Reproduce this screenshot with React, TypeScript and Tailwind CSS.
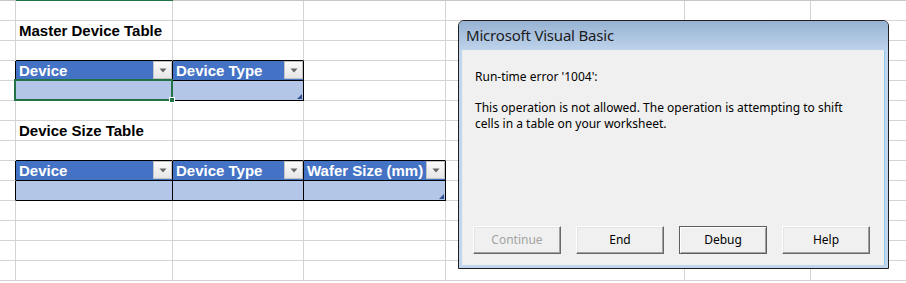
const colW = ['w-[16px]', 'w-[157px]', 'w-[131px]', 'w-[142px]', 'w-[239px]', 'w-[126px]', 'flex-1'];
const ROWS = 14;

const tables = [
    { title: 'Master Device Table', titleRow: 1, header: 3, cols: ['Device', 'Device Type'] },
    { title: 'Device Size Table', titleRow: 6, header: 8, cols: ['Device', 'Device Type', 'Wafer Size (mm)'] },
];

const Dropdown = () => (
    <div className="w-[19px] h-[18px] shrink-0 border border-[#c2c2c2] bg-gradient-to-b from-[#fafafa] to-[#e6e6e6] flex items-center justify-center">
        <svg width="8" height="5" viewBox="0 0 8 5">
            <path d="M0.5 0.5 L7.5 0.5 L4 4.5 Z" fill="#666666" />
        </svg>
    </div>
);

const ResizeHandle = () => (
    <svg className="absolute right-[1px] bottom-[1px]" width="5" height="5" viewBox="0 0 5 5">
        <path d="M5 0 L5 5 L0 5 Z" fill="#2f4f8f" />
    </svg>
);

const Cell = ({ r, c }: { r: number; c: number }) => {
    let rightBlack = false;
    let bottomBlack = false;
    let bg = 'bg-white';
    let content = null;

    for (const t of tables) {
        const n = t.cols.length;
        const inCols = c >= 1 && c <= n;
        if (inCols && r >= t.header - 1 && r <= t.header + 1) bottomBlack = true;
        if ((r === t.header || r === t.header + 1) && c <= n) rightBlack = true;
        if (r === t.titleRow && c === 1) {
            content = (
                <span className="absolute left-[3px] top-0 whitespace-nowrap text-[15px] leading-[19px] font-bold text-black">
                    {t.title}
                </span>
            );
        }
        if (r === t.header && inCols) {
            bg = 'bg-[#4472c4]';
            content = (
                <div className="flex h-full items-start justify-between">
                    <span className="pl-[3px] text-[15px] leading-[19px] font-bold text-white whitespace-nowrap">{t.cols[c - 1]}</span>
                    <Dropdown />
                </div>
            );
        }
        if (r === t.header + 1 && inCols) {
            bg = 'bg-[#b4c6e7]';
            if (c === n) content = <ResizeHandle />;
            if (t.header === 3 && c === 1) {
                content = (
                    <div className="absolute -left-[2px] -top-[2px] -right-[1px] -bottom-[1px] z-10 border-2 border-[#217346]">
                        <div className="absolute -right-[4px] -bottom-[4px] w-[6px] h-[6px] bg-[#217346] border border-white" />
                    </div>
                );
            }
        }
    }

    const last = c === colW.length - 1;
    return (
        <div
            className={`${colW[c]} h-[20px] shrink-0 relative border-b ${last ? '' : 'border-r'} ${
                rightBlack ? 'border-r-black' : 'border-r-[#d4d4d4]'
            } ${bottomBlack ? 'border-b-black' : 'border-b-[#d4d4d4]'} ${bg}`}
        >
            {content}
        </div>
    );
};

const WinButton = ({ label, isDefault, disabled }: { label: string; isDefault?: boolean; disabled?: boolean }) => (
    <button
        className={`w-[88px] h-[28px] bg-[#f0f0f0] text-[12px] ${
            disabled ? 'text-[#a3a3a3]' : 'text-black'
        } ${
            isDefault
                ? 'border border-[#5f5f5f] shadow-[inset_1px_1px_0_#ffffff,inset_-1px_-1px_0_#a0a0a0]'
                : 'border border-t-white border-l-white border-r-[#696969] border-b-[#696969] shadow-[inset_-1px_-1px_0_#a0a0a0,inset_1px_1px_0_#e3e3e3]'
        }`}
    >
        {label}
    </button>
);

const ErrorDialog = () => (
    <div className="absolute left-[458px] top-[20px] w-[431px] h-[249px] z-20 border border-[#1e1e1e] rounded-t-[6px] overflow-hidden bg-[#c1d6ee] flex flex-col font-['Noto_Sans',sans-serif]">
        {/* Title bar */}
        <div className="h-[29px] shrink-0 pl-[7px] flex items-center bg-gradient-to-b from-[#97b2d3] to-[#bed3eb]">
            <span className="text-[15px] tracking-[-0.2px] text-[#1b1b1b]">Microsoft Visual Basic</span>
        </div>
        {/* Body */}
        <div className="flex-1 mx-[3px] mb-[3px] bg-[#f0f0f0] border-r border-r-[#8fcaef] flex flex-col">
            <div className="pl-[13px] pt-[19px] text-[12px] leading-[16px] text-black">
                <p>Run-time error '1004':</p>
                <p className="mt-[15px]">This operation is not allowed. The operation is attempting to shift</p>
                <p>cells in a table on your worksheet.</p>
            </div>
            <div className="mt-auto pb-[11px] pl-[11px] flex gap-[15px]">
                <WinButton label="Continue" disabled />
                <WinButton label="End" />
                <WinButton label="Debug" isDefault />
                <WinButton label="Help" />
            </div>
        </div>
    </div>
);

export default function App() {
    return (
        <div className="relative w-[906px] h-[283px] overflow-hidden bg-white font-['Liberation_Sans',Arial,sans-serif]">
            {/* column header edge */}
            <div className="flex h-[1px]">
                <div className="w-[16px] bg-[#c6c6c6]" />
                <div className="w-[157px] bg-[#217346]" />
                <div className="flex-1 bg-[#c6c6c6]" />
            </div>
            {Array.from({ length: ROWS }, (_, r) => (
                <div key={r} className="flex">
                    {colW.map((_, c) => (
                        <Cell key={c} r={r} c={c} />
                    ))}
                </div>
            ))}
            <ErrorDialog />
        </div>
    );
}
